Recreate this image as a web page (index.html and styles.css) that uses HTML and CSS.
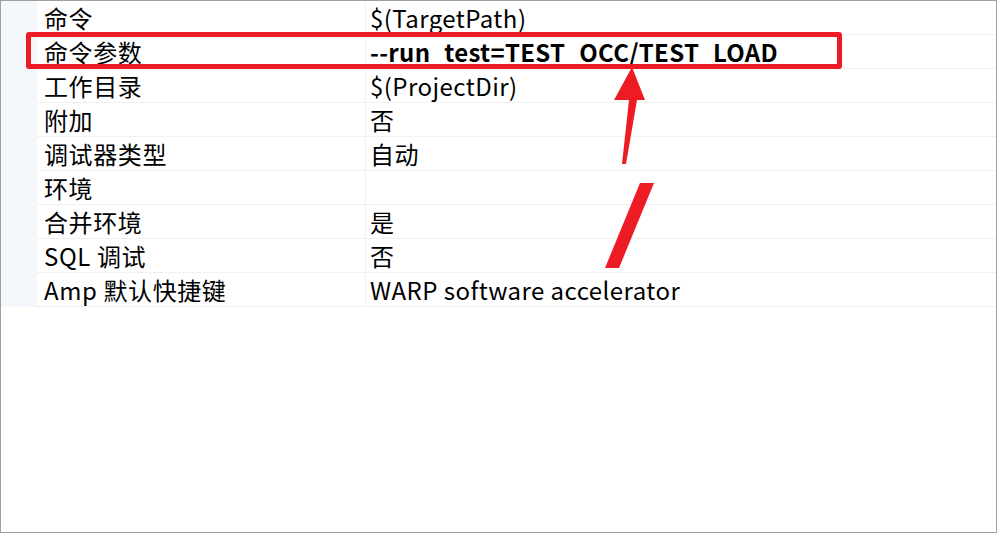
FILE: index.html
```html
<!DOCTYPE html>
<html lang="zh-CN">
<head>
<meta charset="utf-8">
<title>调试属性</title>
<link rel="stylesheet" href="styles.css">
</head>
<body>
<div class="frame">
  <div class="grid">
    <div class="gutter"></div>
    <div class="table">
      <div class="row"><div class="name">命令</div><div class="value latin">$(TargetPath)</div></div>
      <div class="row"><div class="name">命令参数</div><div class="value latin bold">--run_test=TEST_OCC/TEST_LOAD</div></div>
      <div class="row"><div class="name">工作目录</div><div class="value latin">$(ProjectDir)</div></div>
      <div class="row"><div class="name">附加</div><div class="value">否</div></div>
      <div class="row"><div class="name">调试器类型</div><div class="value">自动</div></div>
      <div class="row"><div class="name">环境</div><div class="value"></div></div>
      <div class="row"><div class="name">合并环境</div><div class="value">是</div></div>
      <div class="row"><div class="name">SQL 调试</div><div class="value">否</div></div>
      <div class="row"><div class="name">Amp 默认快捷键</div><div class="value latin">WARP software accelerator</div></div>
    </div>
  </div>
  <div class="highlight"></div>
  <svg class="arrow" width="998" height="534" viewBox="0 0 998 534">
    <polygon points="632,67 645,100 637,100 626,164 622,164 629,100 614,100" fill="#ed1c24"/>
    <polygon points="640,183 654,183 619,268 605,268" fill="#ed1c24"/>
  </svg>
</div>
</body>
</html>
```

FILE: styles.css
```css
html, body {
  margin: 0;
  padding: 0;
  background: #ffffff;
}

.frame {
  position: relative;
  width: 997px;
  height: 533px;
  box-sizing: border-box;
  border: 1px solid #a0a0a0;
  background: #ffffff;
  font-family: "Noto Sans CJK SC", "Open Sans", sans-serif;
  font-size: 24px;
  color: #000000;
  overflow: hidden;
}

.grid {
  display: flex;
  align-items: flex-start;
}

.gutter {
  width: 36px;
  height: 306px;
  background: #f4f7fc;
}

.table {
  flex: 1;
  display: flex;
  flex-direction: column;
}

.row {
  display: flex;
  height: 33px;
  border-bottom: 1px solid #f0f0f0;
  align-items: center;
}

.name {
  width: 321px;
  height: 100%;
  padding-left: 7px;
  border-right: 1px solid #eef0f4;
  display: flex;
  align-items: center;
  white-space: nowrap;
  letter-spacing: 0.6px;
}

.value {
  flex: 1;
  height: 100%;
  padding-left: 4px;
  display: flex;
  align-items: center;
  white-space: nowrap;
  letter-spacing: 0.4px;
}

.latin {
  letter-spacing: 0.45px;
}

.bold {
  font-weight: 700;
  letter-spacing: 0.3px;
}

.highlight {
  position: absolute;
  left: 25px;
  top: 31px;
  width: 806px;
  height: 27px;
  border: 5px solid #ed1c24;
  border-radius: 3px;
}

.arrow {
  position: absolute;
  left: -1px;
  top: -1px;
  pointer-events: none;
}
```
